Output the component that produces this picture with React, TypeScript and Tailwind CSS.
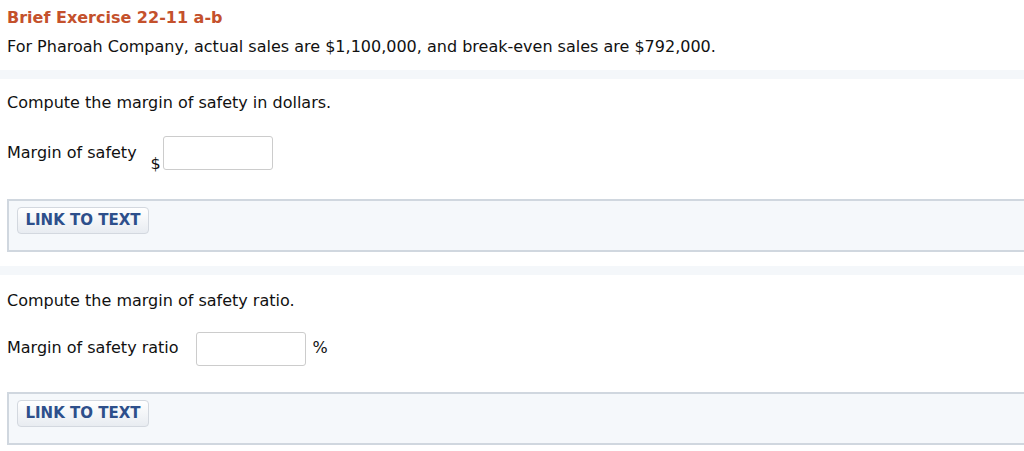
import React from "react";

function LinkBox({ mt }: { mt: string }) {
  return (
    <div className={`${mt} ml-[7px] h-[53px] border-2 border-r-0 border-[#d0d7df] bg-[#f5f8fb] pl-[8px] pt-[6px]`}>
      <button className="h-[27px] w-[132px] rounded-[4px] border border-[#d3d8df] bg-gradient-to-b from-white to-[#e8ecf1] text-[15px] font-bold text-[#2d4f8b] leading-[25px]">
        LINK TO TEXT
      </button>
    </div>
  );
}

export default function App() {
  return (
    <div
      className="w-[1024px] h-[451px] overflow-hidden bg-white text-[#111] text-[16px]"
      style={{ fontFamily: '"DejaVu Sans", Verdana, sans-serif' }}
    >
      <div className="pt-[9px] pl-[7px] text-[16px] font-bold leading-[18px] text-[#c4512c]">
        Brief Exercise 22-11 a-b
      </div>
      <div className="mt-[10px] pl-[7px] leading-[20px]">
        For Pharoah Company, actual sales are $1,100,000, and break-even sales are $792,000.
      </div>
      <div className="mt-[13px] h-[9px] bg-[#f4f7fa]" />
      <div className="mt-[14px] pl-[7px] leading-[20px]">Compute the margin of safety in dollars.</div>
      <div className="mt-[23px] pl-[7px] flex items-center h-[34px]">
        <span className="leading-[20px]">Margin of safety</span>
        <span className="self-end ml-[14px] leading-[16px] mb-[-2px]">$</span>
        <input
          className="ml-[2px] h-[34px] w-[110px] rounded-[3px] border border-[#cccccc] bg-white outline-none"
          type="text"
        />
      </div>
      <LinkBox mt="mt-[29px]" />
      <div className="mt-[14px] h-[9px] bg-[#f4f7fa]" />
      <div className="mt-[16px] pl-[7px] leading-[20px]">Compute the margin of safety ratio.</div>
      <div className="mt-[21px] pl-[7px] flex items-center h-[34px]">
        <span className="leading-[20px] mt-[-2px]">Margin of safety ratio</span>
        <input
          className="ml-[17px] h-[34px] w-[110px] rounded-[3px] border border-[#cccccc] bg-white outline-none"
          type="text"
        />
        <span className="ml-[7px] leading-[20px] mt-[-2px]">%</span>
      </div>
      <LinkBox mt="mt-[26px]" />
    </div>
  );
}
